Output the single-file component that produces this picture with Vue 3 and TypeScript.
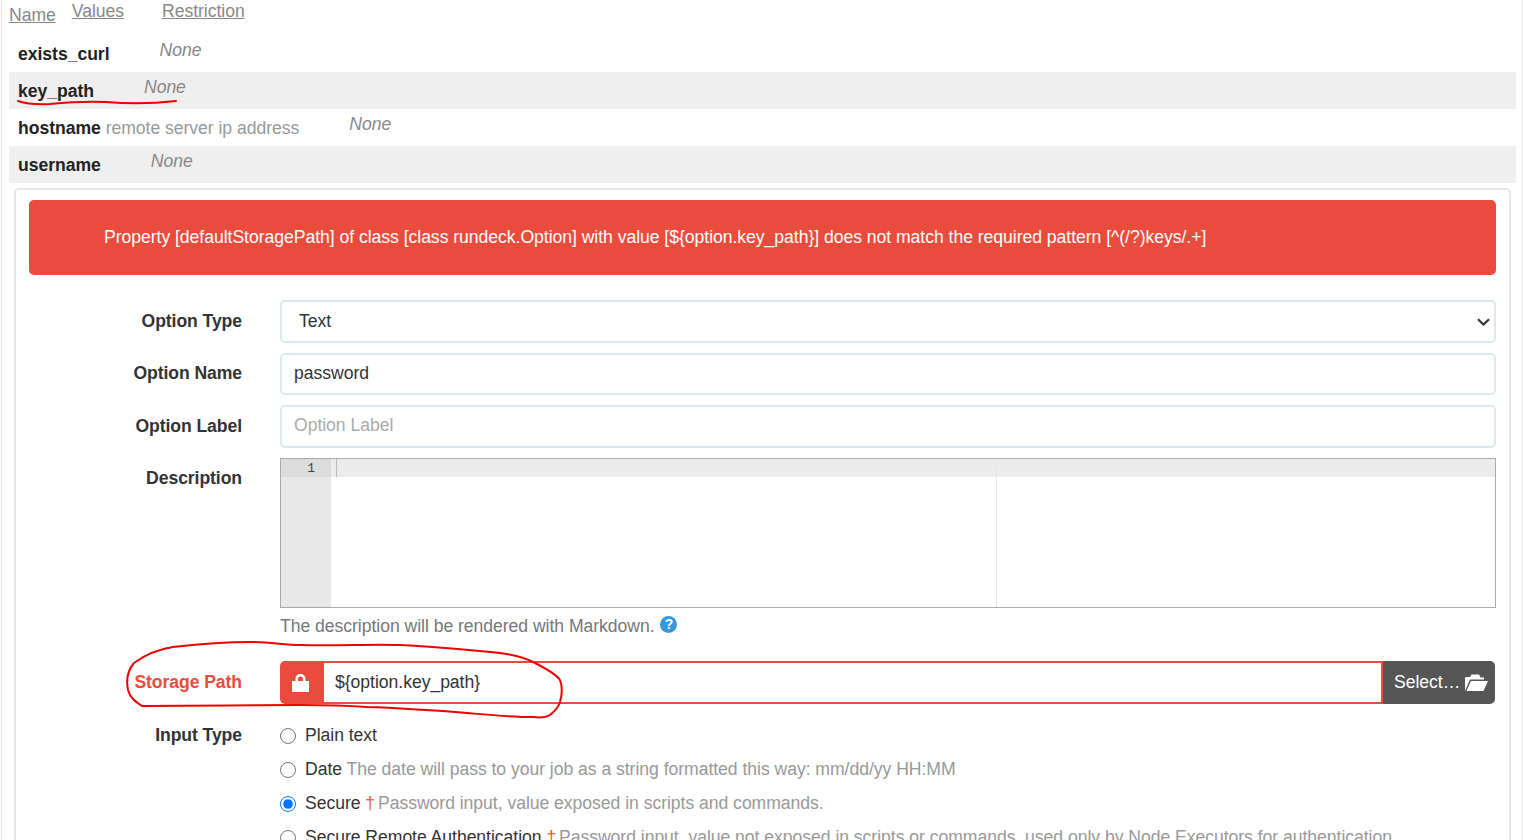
<script setup lang="ts">
interface Opt { name: string; desc?: string; shaded: boolean }
const options: Opt[] = [
  { name: 'exists_curl', shaded: false },
  { name: 'key_path', shaded: true },
  { name: 'hostname', desc: 'remote server ip address', shaded: false },
  { name: 'username', shaded: true },
]
const inputTypes = [
  { name: 'Plain text', dagger: '', desc: '', on: false },
  { name: 'Date', dagger: '', desc: 'The date will pass to your job as a string formatted this way: mm/dd/yy HH:MM', on: false },
  { name: 'Secure', dagger: '†', desc: 'Password input, value exposed in scripts and commands.', on: true },
  { name: 'Secure Remote Authentication', dagger: '†', desc: 'Password input, value not exposed in scripts or commands, used only by Node Executors for authentication.', on: false },
]
</script>

<template>
  <div class="page">
    <div class="head">
      <a class="h-name">Name</a>
      <a class="h-values">Values</a>
      <a class="h-restr">Restriction</a>
    </div>
    <div v-for="o in options" :key="o.name" class="row" :class="{ shaded: o.shaded }">
      <span class="opt"><b>{{ o.name }}</b><span v-if="o.desc" class="muted">{{ ' ' + o.desc }}</span></span>
      <i class="none">None</i>
    </div>

    <section class="panel">
      <div class="alert">Property [defaultStoragePath] of class [class rundeck.Option] with value [${option.key_path}] does not match the required pattern [^(/?)keys/.+]</div>
      <form class="form" @submit.prevent>
        <label class="lab">Option Type</label>
        <div class="sel-wrap">
          <select class="ctl sel"><option>Text</option></select>
          <svg class="chev" width="13" height="8" viewBox="0 0 13 8" fill="none" stroke="#333" stroke-width="2.200"><path d="M1 1.200L6.500 6.500L12 1.200"/></svg>
        </div>

        <label class="lab">Option Name</label>
        <input class="ctl short" value="password" />

        <label class="lab">Option Label</label>
        <input class="ctl" placeholder="Option Label" />

        <label class="lab lab-top">Description</label>
        <div class="desc-cell">
          <div class="editor">
            <div class="gutter"><div class="gutter-line">1</div></div>
            <div class="code">
              <div class="active"><span class="caret"></span></div>
              <div class="margin"></div>
            </div>
          </div>
          <p class="help">The description will be rendered with Markdown. <span class="q">?</span></p>
        </div>

        <label class="lab err">Storage Path</label>
        <div class="storage">
          <span class="addon">
            <svg width="17" height="18" viewBox="0 0 17 18"><path fill="#fff" d="M0 7h17v11H0zM3.500 7V5C3.500 2 5.500 0 8.500 0S13.500 2 13.500 5V7H11V5C11 3.500 10 2.500 8.500 2.500S6 3.500 6 5V7z"/></svg>
          </span>
          <input class="path" value="${option.key_path}" />
          <button class="select" type="button">Select…
            <svg width="23" height="17" viewBox="0 0 23 17"><path fill="#fff" d="M0 17V4.500C0 3.500.7 3 1.500 3H5L6.500.5H14L15.500 3.500H19V5.500H5L0 17zM6 7H23L18.500 17H1.500z"/></svg>
          </button>
        </div>

        <label class="lab">Input Type</label>
        <div class="radios">
          <label v-for="t in inputTypes" :key="t.name" class="radio">
            <input type="radio" name="itype" :checked="t.on" />
            <span>{{ t.name }}</span>
            <span v-if="t.dagger" class="dagger">{{ ' ' + t.dagger }}</span>
            <span v-if="t.desc" class="muted">{{ ' ' + t.desc }}</span>
          </label>
        </div>
      </form>
    </section>

    <svg class="ink" width="1523" height="840" viewBox="0 0 1523 840" fill="none" stroke="#ee0000" stroke-width="2" stroke-linecap="round" stroke-linejoin="round">
      <path d="M18 101C24 103 34 105 50 104C70 102 86 101 106 102C130 104 150 104 176 101"/>
      <path d="M142 706C136 702 130 698 128 690C126 680 128 670 134 663C146 654 160 649 173 647C200 644 225 642 250 642C270 642 285 645 300 645C340 646 370 644 400 645C440 647 470 650 500 653C515 655 525 658 533 662C545 668 556 674 560 680C563 688 562 695 560 702C558 708 554 712 550 715C545 718 540 718 533 717C510 717 490 715 467 713C430 710 400 708 367 707C340 705 320 705 300 705C250 705 190 706 142 706Z"/>
    </svg>
  </div>
</template>

<style>
html, body { margin: 0; overflow: hidden; background: #fff; }
</style>

<style scoped>
.page {
  position: relative;
  box-sizing: border-box;
  width: 1523px;
  height: 840px;
  overflow: hidden;
  padding: 0 7px 0 9px;
  font-family: "Liberation Sans", Arial, sans-serif;
  font-size: 17.6px;
  letter-spacing: -0.04px;
  color: #333;
  background: linear-gradient(#e3e3e3, #e3e3e3) 1px 0 / 1px 100% no-repeat,
    linear-gradient(#e9e9e9, #e9e9e9) 1522px 0 / 1px 100% no-repeat, #fff;
}
.head { display: flex; height: 35px; color: #888; }
.head a { text-decoration: underline; line-height: 20px; }
.h-name { margin-top: 5px; }
.h-values { margin-left: 16px; margin-top: 1px; }
.h-restr { margin-left: 38px; margin-top: 1px; }
.row { display: flex; gap: 50px; box-sizing: border-box; height: 37px; padding: 9px 0 0 9px; line-height: 20px; color: #222; white-space: pre; }
.row b { font-weight: 700; }
.shaded { background: #efefef; }
.muted { color: #999; white-space: pre-wrap; }
.none { color: #888; margin-top: -4px; }
.panel {
  box-sizing: border-box;
  margin: 5px -5px 0 5px;
  width: 1497px;
  height: 760px;
  padding: 10px 13px;
  border: 2px solid #e6e6e6;
  border-radius: 5px;
}
.alert {
  box-sizing: border-box;
  height: 75px;
  padding-left: 75px;
  line-height: 75px;
  margin-bottom: 25px;
  background: #e94c3c;
  color: #fff;
  border-radius: 5px;
  white-space: nowrap;
}
.form { display: grid; grid-template-columns: 213px 1fr; column-gap: 38px; row-gap: 10px; }
.lab { font-weight: 700; text-align: right; align-self: center; line-height: 20px; letter-spacing: -0.08px; padding-bottom: 2px; }
.lab-top { align-self: start; padding-top: 10px; padding-bottom: 0; }
.ctl {
  box-sizing: border-box;
  width: 100%;
  height: 43px;
  padding: 0 12px 2px;
  border: 2px solid #dfe7ee;
  border-radius: 5px;
  font: inherit;
  letter-spacing: inherit;
  color: #333;
  background: #fff;
  outline: none;
}
.short { height: 42px; }
.ctl::placeholder { color: #aaa; opacity: 1; }
.sel-wrap { position: relative; }
.sel { display: block; padding-left: 17px; appearance: none; }
.chev { position: absolute; right: 6px; top: 18px; pointer-events: none; }
.desc-cell { min-width: 0; }
.editor { display: flex; box-sizing: border-box; height: 150px; border: 1px solid #aaa; }
.gutter { width: 50px; background: #e8e8e8; }
.gutter-line {
  height: 18px;
  background: #dcdcdc;
  font: 13px/20px "Liberation Mono", monospace;
  text-align: right;
  padding-right: 16px;
  box-sizing: border-box;
  color: #444;
}
.code { position: relative; flex: 1; }
.active { height: 18px; background: #ececec; }
.caret { display: block; width: 1px; height: 18px; margin-left: 5px; background: #bbb; }
.margin { position: absolute; top: 0; bottom: 0; left: 665px; width: 1px; background: #e8e8e8; }
.help { margin: 8px 0 15px; height: 20px; line-height: 20px; color: #777; }
.q {
  display: inline-block;
  width: 17px;
  height: 17px;
  margin-left: 1px;
  border-radius: 50%;
  background: #3498db;
  color: #fff;
  font-size: 14px;
  font-weight: 700;
  line-height: 17px;
  text-align: center;
  vertical-align: 3px;
}
.storage { display: flex; height: 43px; margin-right: 1px; }
.addon {
  display: flex;
  align-items: center;
  justify-content: center;
  box-sizing: border-box;
  width: 44px;
  padding-right: 3px;
  flex: none;
  background: #e94c3c;
  border-radius: 5px 0 0 5px;
}
.path {
  flex: 1;
  min-width: 0;
  box-sizing: border-box;
  border: 2px solid #e94c3c;
  border-left: 0;
  padding: 0 11px;
  font: inherit;
  letter-spacing: inherit;
  color: #333;
  outline: none;
}
.select {
  display: flex;
  align-items: center;
  gap: 5px;
  box-sizing: border-box;
  width: 112px;
  flex: none;
  padding: 0 0 0 11px;
  border: 0;
  border-radius: 0 5px 5px 0;
  background: #565656;
  color: #fff;
  font: inherit;
  letter-spacing: inherit;
  white-space: nowrap;
}
.err { color: #e94c3c; }
.radios { display: flex; flex-direction: column; gap: 14px; margin-top: 11px; white-space: nowrap; }
.lab:has(+ .radios) { align-self: start; padding-top: 11px; padding-bottom: 0; }
.radio { display: block; line-height: 20px; position: relative; padding-left: 25px; white-space: pre; }
.radio input { position: absolute; left: 0; top: 3px; margin: 0; width: 16px; height: 16px; }
.dagger { color: #e8603c; margin-right: -2px; }
.ink { position: absolute; left: 0; top: 0; pointer-events: none; }
</style>
